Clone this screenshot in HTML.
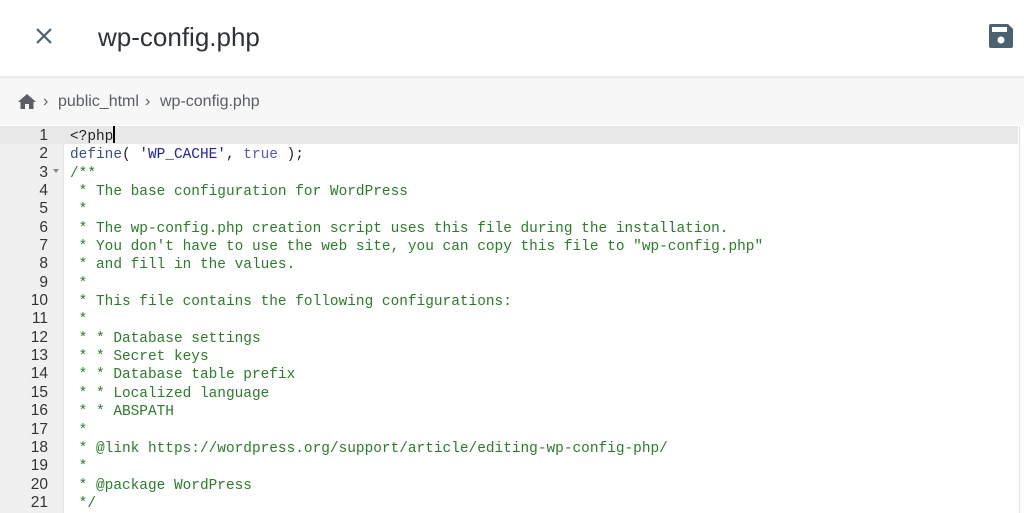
<!DOCTYPE html>
<html><head><meta charset="utf-8"><style>
html,body{margin:0;padding:0;width:1024px;height:513px;overflow:hidden;background:#fff;font-family:"Liberation Sans",sans-serif}
.hdr{position:absolute;left:0;top:0;width:1024px;height:76px;background:#fff;box-shadow:0 1px 3px rgba(0,0,0,.12);z-index:2}
.title{position:absolute;left:98px;top:22px;font-size:26px;color:#2f3337}
.bc{position:absolute;left:0;top:77px;width:1024px;height:48px;background:#f7f7f8}
.bc span{position:absolute;top:16px;font-size:16px;color:#5a5e62}
.ed{position:absolute;left:0;top:126px;width:1024px;height:387px}
.gut{position:absolute;left:0;top:0;width:63px;height:387px;background:#f0f0f0;border-right:1px solid #e4e4e4}
.act{position:absolute;left:0;top:0;width:1018px;height:18px;background:#e8e8e8}
.sb{position:absolute;left:1019px;top:0;width:1px;height:387px;background:#e0e0e0}
.ln,.code{position:absolute;top:0;line-height:18.35px;white-space:pre}
.ln{left:0;width:48px;text-align:right;color:#333;font-family:"Liberation Sans",sans-serif;font-size:15.5px;top:1px}
.code{left:70px;color:#222;font-family:"Liberation Mono",monospace;font-size:14.45px}
.c{color:#2a7d2a}.k{color:#3b4f85}.s{color:#2020b0}.t{color:#5757c9}
.cur{display:inline-block;width:1.5px;height:17px;background:#000;vertical-align:-3px}
</style></head><body>
<div class="hdr">
<svg style="position:absolute;left:35px;top:27px" width="18" height="18" viewBox="0 0 18 18"><path d="M2 2L16 16M16 2L2 16" stroke="#4b6370" stroke-width="2.2"/></svg>
<div class="title">wp-config.php</div>
<svg style="position:absolute;left:989px;top:24px" width="25" height="24" viewBox="0 0 25 24"><path d="M2 0H19L24 5V22Q24 24 22 24H2Q0 24 0 22V2Q0 0 2 0Z" fill="#4b6370"/><rect x="3" y="3" width="15" height="5" fill="#fff"/><circle cx="12" cy="16" r="3.5" fill="#fff"/></svg>
</div>
<div class="bc">
<svg style="position:absolute;left:18px;top:17px" width="18" height="15" viewBox="0 0 18 15"><path d="M9 0L0 8H2.5V15H7V10H11V15H15.5V8H18Z" fill="#5a5e62"/></svg>
<span style="left:43px">›</span><span style="left:58px">public_html</span><span style="left:145px">›</span><span style="left:160px">wp-config.php</span>
</div>
<div class="ed">
<div class="gut"></div>
<div class="act"></div><div class="sb"></div>
<div class="ln">1
2
3
4
5
6
7
8
9
10
11
12
13
14
15
16
17
18
19
20
21</div>
<div style="position:absolute;left:53px;top:43px;width:0;height:0;border-left:3px solid transparent;border-right:3px solid transparent;border-top:4px solid #888"></div>
<div class="code">&lt;?php<span class="cur"></span>
<span class="k">define</span>( <span class="s">'WP_CACHE'</span>, <span class="t">true</span> );
<span class="c">/**
 * The base configuration for WordPress
 *
 * The wp-config.php creation script uses this file during the installation.
 * You don't have to use the web site, you can copy this file to "wp-config.php"
 * and fill in the values.
 *
 * This file contains the following configurations:
 *
 * * Database settings
 * * Secret keys
 * * Database table prefix
 * * Localized language
 * * ABSPATH
 *
 * @link https://wordpress.org/support/article/editing-wp-config-php/
 *
 * @package WordPress
 */</span></div>
</div>
</body></html>
